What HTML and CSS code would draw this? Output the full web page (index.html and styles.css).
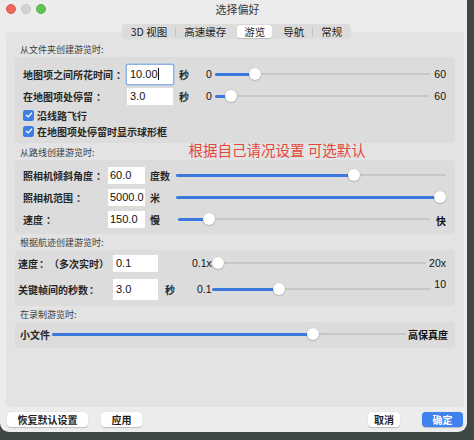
FILE: index.html
```html
<!DOCTYPE html>
<html lang="zh">
<head>
<meta charset="utf-8">
<title>选择偏好</title>
<link rel="stylesheet" href="styles.css">
</head>
<body>
<div class="window">
  <div class="titlebar">
    <div class="lights">
      <span class="light red"></span>
      <span class="light grey"></span>
      <span class="light green"></span>
    </div>
    <div class="title">选择偏好</div>
    <div class="lights-spacer"></div>
  </div>
  <div class="tabbar">
    <div class="segmented">
      <span class="tab">3D 视图</span>
      <span class="sep"></span>
      <span class="tab">高速缓存</span>
      <span class="tab selected">游览</span>
      <span class="tab">导航</span>
      <span class="sep"></span>
      <span class="tab">常规</span>
    </div>
  </div>
  <div class="pane">
    <div class="section-label">从文件夹创建游览时:</div>
    <div class="group g1">
      <div class="row r1">
        <span class="label">地图项之间所花时间<span class="colon">：</span></span>
        <span class="input focused">10.00<i class="caret"></i></span>
        <span class="unit">秒</span>
        <span class="minv">0</span>
        <div class="slider" style="--p:0.1667"><i class="fill"></i><i class="thumb"></i></div>
        <span class="maxv">60</span>
      </div>
      <div class="row r2">
        <span class="label">在地图项处停留<span class="colon">：</span></span>
        <span class="input">3.0</span>
        <span class="unit">秒</span>
        <span class="minv">0</span>
        <div class="slider" style="--p:0.05"><i class="fill"></i><i class="thumb"></i></div>
        <span class="maxv">60</span>
      </div>
      <label class="check"><span class="box"><svg viewBox="0 0 10 10" width="8" height="8"><path d="M1.8 5.2 L4 7.3 L8.2 2.6" fill="none" stroke="#fff" stroke-width="1.7" stroke-linecap="round" stroke-linejoin="round"/></svg></span>沿线路飞行</label>
      <label class="check"><span class="box"><svg viewBox="0 0 10 10" width="8" height="8"><path d="M1.8 5.2 L4 7.3 L8.2 2.6" fill="none" stroke="#fff" stroke-width="1.7" stroke-linecap="round" stroke-linejoin="round"/></svg></span>在地图项处停留时显示球形框</label>
    </div>

    <div class="section-label with-note">
      <span>从路线创建游览时:</span>
      <span class="note">根据自己请况设置 可选默认</span>
    </div>
    <div class="group g2">
      <div class="row">
        <span class="label">照相机倾斜角度<span class="colon">：</span></span>
        <span class="input">60.0</span>
        <span class="unit">度数</span>
        <div class="slider" style="--p:0.667"><i class="fill"></i><i class="thumb"></i></div>
      </div>
      <div class="row">
        <span class="label">照相机范围<span class="colon">：</span></span>
        <span class="input">5000.0</span>
        <span class="unit">米</span>
        <div class="slider" style="--p:1"><i class="fill"></i><i class="thumb"></i></div>
      </div>
      <div class="row r3">
        <span class="label">速度<span class="colon">：</span></span>
        <span class="input">150.0</span>
        <span class="unit">慢</span>
        <div class="slider" style="--p:0.103"><i class="fill"></i><i class="thumb"></i></div>
        <span class="maxv">快</span>
      </div>
    </div>

    <div class="section-label">根据航迹创建游览时:</div>
    <div class="group g3">
      <div class="row">
        <span class="label">速度<span class="colon">：</span>（多次实时）</span>
        <span class="input">0.1</span>
        <span class="unit"></span>
        <span class="minv">0.1x</span>
        <div class="slider" style="--p:0"><i class="fill"></i><i class="thumb"></i></div>
        <span class="maxv">20x</span>
      </div>
      <div class="row tall">
        <span class="label">关键帧间的秒数<span class="colon">：</span></span>
        <span class="input">3.0</span>
        <span class="unit">秒</span>
        <span class="minv indent">0.1</span>
        <div class="slider" style="--p:0.296"><i class="fill"></i><i class="thumb"></i></div>
        <span class="maxv raised">10</span>
      </div>
    </div>

    <div class="section-label">在录制游览时:</div>
    <div class="group g4">
      <div class="row">
        <span class="label">小文件</span>
        <div class="slider" style="--p:0.746"><i class="fill"></i><i class="thumb"></i></div>
        <span class="maxv">高保真度</span>
      </div>
    </div>
  </div>
  <div class="buttons">
    <button class="btn b-reset">恢复默认设置</button>
    <button class="btn b-apply">应用</button>
    <span class="grow"></span>
    <button class="btn b-cancel">取消</button>
    <button class="btn primary b-ok">确定</button>
  </div>
</div>
</body>
</html>
```

FILE: styles.css
```css
* { box-sizing: border-box; }

html, body {
  margin: 0;
  padding: 0;
}

body {
  width: 474px;
  height: 440px;
  overflow: hidden;
  background: #3f4943;
  font-family: "Liberation Sans", "Noto Sans CJK SC", sans-serif;
  color: #1e1e1e;
  text-spacing-trim: space-all;
}

.window {
  width: 467px;
  height: 432px;
  background: #ececec;
  border-radius: 0 0 9px 9px;
  display: flex;
  flex-direction: column;
  overflow: hidden;
}

/* title bar */
.titlebar {
  height: 24px;
  display: flex;
  align-items: flex-start;
  padding-top: 4px;
}

.lights {
  width: 60px;
  display: flex;
  gap: 5px;
  padding-left: 6px;
}

.lights-spacer { width: 52px; }

.light {
  width: 10px;
  height: 10px;
  border-radius: 50%;
  display: block;
}

.light.red { background: #ee6a5f; border: 0.5px solid #d8574c; }
.light.grey { background: #d3d3d3; border: 0.5px solid #c4c4c4; }
.light.green { background: #5fc453; border: 0.5px solid #4fae45; }

.title {
  flex: 1;
  text-align: center;
  font-size: 11px;
  line-height: 11px;
  color: #3a3a3a;
  font-family: "Noto Sans CJK SC", sans-serif;
}

/* tabs */
.tabbar {
  height: 15px;
  display: flex;
  justify-content: center;
  position: relative;
  z-index: 2;
  padding-left: 6px;
}

.segmented {
  display: flex;
  align-items: center;
  height: 15px;
  background: #dcdcdc;
  border-radius: 4px;
  padding: 0 1px;
}

.tab {
  font-family: "Noto Sans CJK SC", sans-serif;
  font-size: 10.5px;
  line-height: 13px;
  height: 13px;
  padding: 0 8px;
  color: #1e1e1e;
  border-radius: 3px;
}

.tab.selected {
  background: #ffffff;
  padding: 0 7px;
  margin: 0 3px;
  box-shadow: 0 0.5px 1px rgba(0,0,0,0.15);
}

.sep {
  width: 1px;
  height: 8px;
  background: #c2c2c2;
}

/* pane */
.pane {
  margin: -7px 3px 0 6px;
  height: 375px;
  background: #e3e3e3;
  border-radius: 4px;
  padding: 12px 9px 0 9px;
  display: flex;
  flex-direction: column;
}

.section-label {
  font-family: "Noto Sans CJK SC", sans-serif;
  font-size: 9px;
  line-height: 12px;
  height: 12px;
  color: #3b3b3b;
  padding-left: 5px;
  margin-top: 3px;
}

.section-label:first-child { margin-top: 0; }

.with-note {
  display: flex;
  align-items: flex-end;
  margin-top: 4px;
}

.note {
  font-family: "Noto Sans CJK SC", sans-serif;
  font-size: 14.5px;
  line-height: 16px;
  color: #e4473d;
  margin-left: 94px;
  margin-bottom: 1px;
  white-space: nowrap;
}

.group {
  background: #dcdcdc;
  border-radius: 4px;
  margin-top: 1px;
  padding: 7px 9px 4px 8px;
  display: flex;
  flex-direction: column;
}

.row {
  display: flex;
  align-items: center;
  height: 20px;
  font-size: 10.5px;
  white-space: nowrap;
}

.label {
  font-family: "Noto Sans CJK SC", sans-serif;
  font-size: 10px;
  font-weight: 700;
  flex: none;
  color: #262626;
}

.colon {
  display: inline-block;
  padding-left: 3px;
}

.input {
  flex: none;
  height: 17px;
  background: #ffffff;
  font-size: 11px;
  line-height: 17px;
  padding-left: 3px;
  color: #111;
  display: flex;
  align-items: center;
}

.input.focused {
  height: 19px;
  box-shadow: 0 0 0 1.5px #8fb1ea;
  border-radius: 1px;
}

.caret {
  display: block;
  width: 1px;
  height: 12px;
  background: #111;
  margin-left: 0.5px;
}

.unit {
  flex: none;
  font-family: "Noto Sans CJK SC", sans-serif;
  font-size: 10px;
  font-weight: 700;
  color: #262626;
}

.minv, .maxv {
  flex: none;
  font-size: 10.5px;
  color: #111;
  font-family: "Liberation Sans", "Noto Sans CJK SC", sans-serif;
}

.maxv { margin-left: 4px; }

/* slider */
.slider {
  flex: 1;
  position: relative;
  height: 14px;
}

.slider::before {
  content: "";
  position: absolute;
  left: 0;
  right: 0;
  top: 6px;
  height: 2px;
  border-radius: 1px;
  background: #c7c7c7;
}

.slider .fill {
  position: absolute;
  left: 0;
  top: 5.5px;
  height: 3px;
  border-radius: 1.5px;
  background: #3b79de;
  width: calc((100% - 12px) * var(--p) + 6px);
}

.slider .thumb {
  position: absolute;
  top: 1px;
  width: 12px;
  height: 12px;
  border-radius: 50%;
  background: #ffffff;
  box-shadow: 0 0.5px 1.5px rgba(0,0,0,0.35);
  left: calc((100% - 12px) * var(--p));
}

/* group 1 */
.g1 .label { width: 104px; }
.g1 .input { width: 46px; }
.g1 .unit { width: 33px; padding-left: 6px; }
.g1 .minv { width: 9px; }
.g1 .row + .row { margin-top: 2px; }

.check {
  display: flex;
  align-items: center;
  height: 16px;
  font-family: "Noto Sans CJK SC", sans-serif;
  font-size: 10px;
  font-weight: 700;
  color: #262626;
}

.check:first-of-type { margin-top: 1px; }

.box {
  width: 11px;
  height: 11px;
  border-radius: 2.5px;
  background: #3c7ee5;
  display: flex;
  align-items: center;
  justify-content: center;
  margin-right: 3px;
}

/* group 2 */
.g2 { padding-top: 5px; padding-bottom: 5px; }
.g2 .label { width: 85px; }
.g2 .input { width: 37px; padding-left: 2px; }
.g2 .unit { width: 31px; padding-left: 5px; }
.g2 .row + .row { margin-top: 2px; }
.g2 .r3 { margin-top: 1px; }
.g2 .r3 .unit { width: 33px; }
.g2 .r3 .maxv { margin-left: 6px; margin-top: 3px; font-family: "Noto Sans CJK SC", sans-serif; font-size: 10px; font-weight: 700; }

/* group 3 */
.g3 { padding: 3px 9px 6px 3px; }
.g3 .label { width: 95px; }
.g3 .input { width: 45px; }
.g3 .unit { width: 34px; padding-left: 7px; }
.g3 .minv { width: 20px; }
.g3 .minv.indent { padding-left: 5px; }
.g3 .row.tall { height: 22px; margin-top: 5px; }
.g3 .row.tall .input { height: 21px; }
.g3 .maxv { margin-left: 3px; }
.g3 .maxv.raised { align-self: flex-start; margin-top: 0; }
.g3 .label .colon { padding-left: 1px; }

/* group 4 */
.g4 { padding: 2px 7px 4px 5px; }
.g4 .slider { margin-left: 2px; }
.g4 .maxv { margin-left: 2px; font-family: "Noto Sans CJK SC", sans-serif; font-size: 10px; font-weight: 700; }

/* buttons */
.buttons {
  display: flex;
  align-items: center;
  margin-top: 5px;
  height: 15px;
  padding: 0 4px 0 7px;
}

.grow { flex: 1; }

.btn {
  font-family: "Noto Sans CJK SC", sans-serif;
  font-size: 10px;
  font-weight: 700;
  height: 15px;
  line-height: 15px;
  padding: 0;
  border: none;
  border-radius: 4px;
  background: #ffffff;
  color: #1e1e1e;
  box-shadow: 0 0.5px 1px rgba(0,0,0,0.2);
}

.b-reset { width: 81px; }
.b-apply { width: 41px; margin-left: 13px; }
.b-cancel { width: 32px; }
.b-ok { width: 41px; margin-left: 22px; }

.btn.primary {
  background: #3d82ee;
  color: #ffffff;
}
```
